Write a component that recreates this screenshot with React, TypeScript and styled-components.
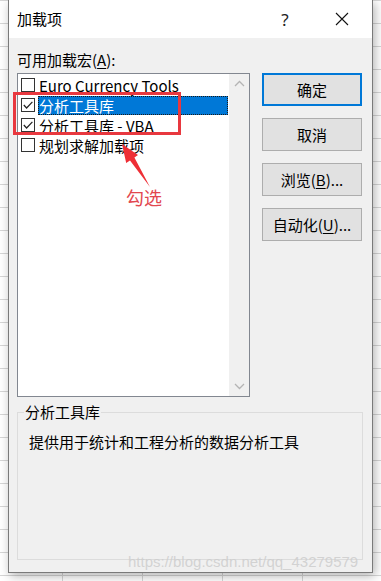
import React from 'react';
import styled, { createGlobalStyle } from 'styled-components';

const GlobalStyle = createGlobalStyle`
  html, body {
    margin: 0;
    padding: 0;
  }
  body {
    width: 381px;
    height: 581px;
    overflow: hidden;
    background-color: #fff;
    background-image:
      linear-gradient(to right, #d6d6d6 1px, transparent 1px),
      linear-gradient(to bottom, #d6d6d6 1px, transparent 1px);
    background-size: 80px 23px;
    background-position: 62px 0;
    font-family: "Noto Sans CJK SC", "Noto Sans", sans-serif;
    color: #000;
  }
`;

const Dialog = styled.div`
  position: relative;
  margin-left: 8px;
  width: 365px;
  height: 573px;
  box-sizing: border-box;
  border: 1px solid #7a7a7a;
  border-top: none;
  background: #f0f0f0;
  box-shadow: 2px 3px 10px rgba(0, 0, 0, 0.3);
  display: flex;
  flex-direction: column;
`;

const TitleBar = styled.div`
  height: 38px;
  background: #fff;
  display: flex;
  align-items: center;
  padding-left: 8px;
  padding-right: 7px;
`;

const Title = styled.div`
  flex: 1;
  font-size: 15px;
  line-height: 20px;
`;

const TitleButton = styled.div`
  width: 46px;
  height: 38px;
  display: flex;
  align-items: center;
  justify-content: center;
  font-family: "Noto Sans", sans-serif;
  font-size: 17px;
  color: #222;
  & + & {
    margin-left: 11px;
  }
`;

const Body = styled.div`
  flex: 1;
  padding: 12px 9px 12px 8px;
  display: flex;
  flex-direction: column;
`;

const FieldLabel = styled.div`
  font-size: 15px;
  line-height: 20px;
  margin-bottom: 3px;

  u {
    text-decoration: underline;
    text-underline-offset: 2px;
  }
`;

const MainRow = styled.div`
  display: flex;
  gap: 12px;
`;

const ListBox = styled.div`
  width: 233px;
  height: 324px;
  box-sizing: border-box;
  border: 1px solid #828790;
  background: #fff;
  display: flex;
`;

const Items = styled.div`
  flex: 1;
  padding-top: 1px;
`;

const Item = styled.div`
  height: 20px;
  display: flex;
  align-items: center;
  padding-left: 3px;
  padding-right: 1px;
`;

const Check = styled.span`
  width: 14px;
  height: 14px;
  box-sizing: border-box;
  border: 1px solid #333;
  background: #fff;
  display: flex;
  align-items: center;
  justify-content: center;
  flex-shrink: 0;
`;

const ItemText = styled.span<{ $selected?: boolean }>`
  flex: 1;
  margin-left: 3px;
  height: 19px;
  padding-left: 1px;
  box-sizing: border-box;
  font-size: 15px;
  line-height: 19px;
  white-space: nowrap;
  color: ${(p) => (p.$selected ? '#fff' : '#000')};
  background: ${(p) => (p.$selected ? '#0078d7' : 'transparent')};
  outline: ${(p) => (p.$selected ? '1px dotted #1a1a1a' : 'none')};
  outline-offset: -1px;
`;

const ScrollBar = styled.div`
  width: 20px;
  background: #f0f0f0;
  display: flex;
  flex-direction: column;
  justify-content: space-between;
  align-items: center;
  padding: 6px 0;
`;

const ButtonColumn = styled.div`
  width: 100px;
  display: flex;
  flex-direction: column;
  gap: 12px;
`;

const Button = styled.div<{ $default?: boolean }>`
  height: 33px;
  box-sizing: border-box;
  border: ${(p) => (p.$default ? '2px solid #0078d7' : '1px solid #adadad')};
  background: #e1e1e1;
  display: flex;
  align-items: center;
  justify-content: center;
  font-size: 15px;

  u {
    text-decoration: underline;
    text-underline-offset: 2px;
  }
`;

const GroupBox = styled.fieldset`
  margin: 5px 0 0 0;
  padding: 0 11px;
  height: 158px;
  box-sizing: border-box;
  border: 1px solid #dcdcdc;
  min-width: 0;
`;

const Legend = styled.legend`
  margin-left: -5px;
  padding: 0 1px;
  font-size: 15px;
  line-height: 20px;
`;

const Description = styled.div`
  margin-top: 10px;
  font-size: 15px;
  line-height: 20px;
`;

const Highlight = styled.div`
  position: absolute;
  left: 4px;
  top: 92px;
  width: 168px;
  height: 43px;
  box-sizing: border-box;
  border: 3px solid #e8383f;
`;

const ArrowSvg = styled.svg`
  position: absolute;
  left: 91px;
  top: 138px;
`;

const Note = styled.div`
  position: absolute;
  left: 117px;
  top: 185px;
  font-size: 18px;
  line-height: 24px;
  color: #e2474f;
`;

const Watermark = styled.div`
  position: absolute;
  left: 119px;
  top: 552px;
  font-family: "Liberation Sans", Arial, sans-serif;
  font-size: 15px;
  line-height: 20px;
  color: rgba(205, 205, 205, 0.85);
  white-space: nowrap;
`;

const CheckMark = () => (
  <svg width="12" height="12" viewBox="0 0 12 12">
    <path d="M1.8 6 L4.6 9 L10.4 2.8" fill="none" stroke="#222" strokeWidth="1.2" />
  </svg>
);

const Chevron = ({ up }: { up?: boolean }) => (
  <svg width="11" height="7" viewBox="0 0 11 7">
    <path
      d={up ? 'M1 6 L5.5 1.5 L10 6' : 'M1 1 L5.5 5.5 L10 1'}
      fill="none"
      stroke="#b4b4b4"
      strokeWidth="1.3"
    />
  </svg>
);

const items = [
  { label: 'Euro Currency Tools', checked: false, selected: false },
  { label: '分析工具库', checked: true, selected: true },
  { label: '分析工具库 - VBA', checked: true, selected: false },
  { label: '规划求解加载项', checked: false, selected: false },
];

const App: React.FC = () => {
  return (
    <>
      <GlobalStyle />
      <Dialog>
        <TitleBar>
          <Title>加载项</Title>
          <TitleButton>?</TitleButton>
          <TitleButton>
            <svg width="14" height="14" viewBox="0 0 14 14">
              <path d="M1 1 L13 13 M13 1 L1 13" stroke="#111" strokeWidth="1.1" />
            </svg>
          </TitleButton>
        </TitleBar>
        <Body>
          <FieldLabel>
            可用加载宏(<u>A</u>):
          </FieldLabel>
          <MainRow>
            <ListBox>
              <Items>
                {items.map((it) => (
                  <Item key={it.label}>
                    <Check>{it.checked && <CheckMark />}</Check>
                    <ItemText $selected={it.selected}>{it.label}</ItemText>
                  </Item>
                ))}
              </Items>
              <ScrollBar>
                <Chevron up />
                <Chevron />
              </ScrollBar>
            </ListBox>
            <ButtonColumn>
              <Button $default>确定</Button>
              <Button>取消</Button>
              <Button>
                浏览(<u>B</u>)...
              </Button>
              <Button>
                自动化(<u>U</u>)...
              </Button>
            </ButtonColumn>
          </MainRow>
          <GroupBox>
            <Legend>分析工具库</Legend>
            <Description>提供用于统计和工程分析的数据分析工具</Description>
          </GroupBox>
        </Body>

        <Highlight />
        <ArrowSvg width="60" height="52" viewBox="100 138 60 52">
          <polygon
            points="122,144 138,155 134.4,157.6 150,187 130,160.4 126.2,163"
            fill="#ee2f36"
          />
        </ArrowSvg>
        <Note>勾选</Note>
        <Watermark>https://blog.csdn.net/qq_43279579</Watermark>
      </Dialog>
    </>
  );
};

export default App;
